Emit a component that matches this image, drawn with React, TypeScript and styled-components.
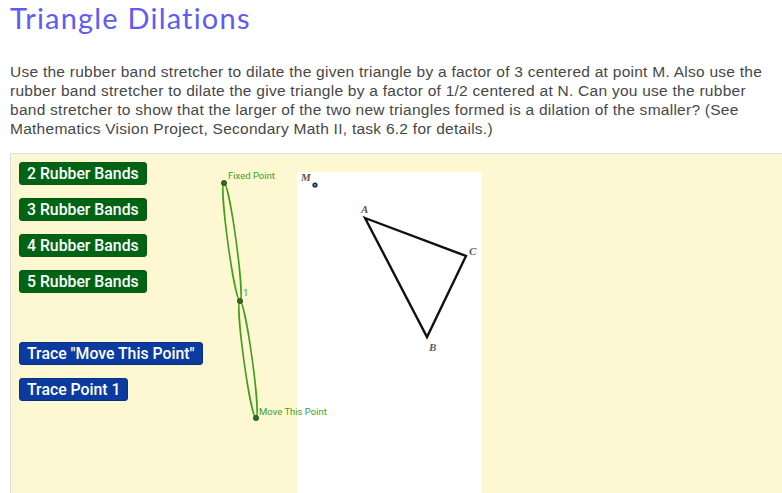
import React from 'react'
import styled, { createGlobalStyle } from 'styled-components'

const GlobalStyle = createGlobalStyle`
  html, body {
    margin: 0;
    padding: 0;
    background: #ffffff;
    overflow: hidden;
  }
`

const bandButtons = ['2 Rubber Bands', '3 Rubber Bands', '4 Rubber Bands', '5 Rubber Bands']
const traceButtons = ['Trace "Move This Point"', 'Trace Point 1']

const App = () => {
  return (
    <Page>
      <GlobalStyle />
      <Title>Triangle Dilations</Title>
      <Description>
        Use the rubber band stretcher to dilate the given triangle by a factor of 3 centered at point M. Also use the
        rubber band stretcher to dilate the give triangle by a factor of 1/2 centered at N. Can you use the rubber
        band stretcher to show that the larger of the two new triangles formed is a dilation of the smaller? (See
        Mathematics Vision Project, Secondary Math II, task 6.2 for details.)
      </Description>

      <Applet>
        <Controls>
          {bandButtons.map((label) => (
            <ToolButton key={label} $tone="green">{label}</ToolButton>
          ))}
          <Spacer />
          {traceButtons.map((label) => (
            <ToolButton key={label} $tone="blue">{label}</ToolButton>
          ))}
        </Controls>
        <Sheet />

        <Drawing width="800" height="360">
          {/* rubber bands */}
          <g fill="none" stroke="#3f9f1c" strokeWidth="1.6">
            <ellipse cx="221" cy="88" rx="59.5" ry="4.2" transform="rotate(82.3 221 88)" />
            <ellipse cx="237" cy="205.5" rx="59" ry="4.2" transform="rotate(82.2 237 205.5)" />
          </g>
          <g fill="#2e6e18" stroke="#1f4d10" strokeWidth="0.8">
            <circle cx="213" cy="29" r="2.6" />
            <circle cx="229" cy="147" r="2.6" />
            <circle cx="245" cy="264" r="2.6" />
          </g>
          <g fill="#3f9f1c" fontFamily="Roboto, sans-serif" fontSize="9.5">
            <text x="217" y="25">Fixed Point</text>
            <text x="232" y="142">1</text>
            <text x="248" y="261">Move This Point</text>
          </g>

          {/* triangle ABC and centre M */}
          <polygon points="354,64 455,102 416,183" fill="none" stroke="#111" strokeWidth="2.4" strokeLinejoin="miter" />
          <circle cx="304" cy="31" r="2.6" fill="#1c2b4a" />
          <circle cx="304" cy="31" r="0.9" fill="#9aa6c0" />
          <g fill="#5a5a5a" fontFamily="'Liberation Serif', serif" fontStyle="italic" fontWeight="bold" fontSize="11">
            <text x="290" y="27">M</text>
            <text x="350" y="59">A</text>
            <text x="458" y="101">C</text>
            <text x="418" y="197">B</text>
          </g>
        </Drawing>
      </Applet>
    </Page>
  )
}

export default App

const Page = styled.div`
  width: 782px;
  height: 493px;
  padding-left: 10px;
  box-sizing: border-box;
  display: flex;
  flex-direction: column;
  overflow: hidden;
`

const Title = styled.h1`
  margin: 0;
  padding-top: 1px;
  font-family: Lato, 'Open Sans', sans-serif;
  font-weight: 400;
  font-size: 29px;
  letter-spacing: 1.2px;
  line-height: 34px;
  color: #5e5cf2;
`

const Description = styled.p`
  margin: 27px 0 0;
  width: 770px;
  font-family: 'Liberation Sans', Arial, sans-serif;
  font-size: 15.5px;
  letter-spacing: 0.26px;
  line-height: 19px;
  color: #474747;
`

const Applet = styled.div`
  position: relative;
  flex: 1;
  margin-top: 15px;
  border-top: 1px solid #dcdcdc;
  border-left: 1px solid #dcdcdc;
  background-color: #fef8d2;
  display: flex;
`

const Controls = styled.div`
  width: 286px;
  box-sizing: border-box;
  padding: 8px 0 0 8px;
  display: flex;
  flex-direction: column;
  align-items: flex-start;
  gap: 13px;
`

const Spacer = styled.div`
  height: 23px;
`

const ToolButton = styled.button<{ $tone: 'green' | 'blue' }>`
  height: 23px;
  padding: 0 7px;
  border: 1px solid ${(p) => (p.$tone === 'green' ? '#0b5a12' : '#0b2f86')};
  border-radius: 3px;
  background-color: ${(p) => (p.$tone === 'green' ? '#006414' : '#0c3b9f')};
  color: #ffffff;
  font-family: Roboto, 'Liberation Sans', sans-serif;
  font-weight: 500;
  font-size: 15.8px;
  line-height: 21px;
  white-space: nowrap;
  cursor: pointer;
`

const Sheet = styled.div`
  width: 185px;
  margin-top: 18px;
  background-color: #ffffff;
`

const Drawing = styled.svg`
  position: absolute;
  left: 0;
  top: 0;
  pointer-events: none;
`
